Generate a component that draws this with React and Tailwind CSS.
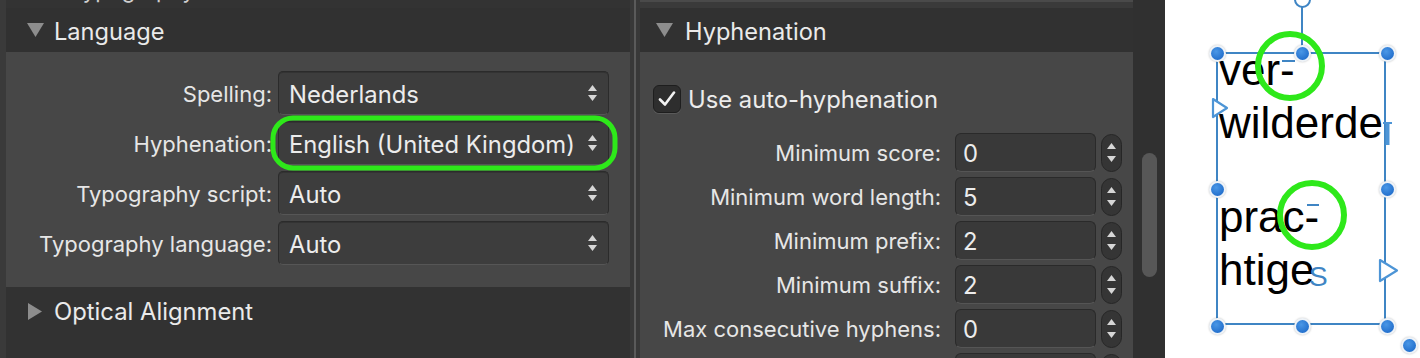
import React from "react";

const ui = "font-['Inter','Noto_Sans',sans-serif]";

const Disclosure = ({ open }) =>
  open ? (
    <svg width="17" height="14" viewBox="0 0 17 14">
      <path d="M0 0 H17 L8.5 14 Z" fill="#8d8d8d" />
    </svg>
  ) : (
    <svg width="14" height="17" viewBox="0 0 14 17">
      <path d="M0 0 L14 8.5 L0 17 Z" fill="#8d8d8d" />
    </svg>
  );

const UpDown = ({ gap = "gap-[4px]" }) => (
  <div className={`flex flex-col items-center ${gap}`}>
    <svg width="9" height="6" viewBox="0 0 9 6">
      <path d="M4.5 0 L9 6 H0 Z" fill="#d6d6d6" />
    </svg>
    <svg width="9" height="6" viewBox="0 0 9 6">
      <path d="M0 0 H9 L4.5 6 Z" fill="#d6d6d6" />
    </svg>
  </div>
);

const SelectRow = ({ label, value }) => (
  <div className="flex items-center h-[44px] shrink-0">
    <div className="w-[266px] pt-[3px] text-right text-[22px] text-[#e6e6e6]">{label}</div>
    <div className="ml-[6px] w-[331px] h-[44px] rounded-[5px] bg-[#3d3d3d] border border-[#2b2b2b] border-b-[#565656] shadow-[inset_0_1px_0_#333] flex items-center justify-between pl-[10px] pr-[11px]">
      <span className="pt-[3px] text-[23.8px] text-[#ececec]">{value}</span>
      <UpDown />
    </div>
  </div>
);

const SpinRow = ({ label, value }) => (
  <div className="flex items-center h-[39px] shrink-0">
    <div className="w-[301px] pt-[2px] text-right text-[22px] text-[#e6e6e6]">{label}</div>
    <div className="ml-[14px] w-[141px] h-[39px] rounded-[6px] bg-[#393939] border border-[#2a2a2a] border-b-[#555] flex items-center pl-[7px]">
      <span className="pt-[2px] text-[23.8px] text-[#ececec]">{value}</span>
    </div>
    <div className="ml-[5px] w-[21px] h-[38px] rounded-full bg-[#353535] border border-[#262626] flex items-center justify-center">
      <UpDown gap="gap-[7px]" />
    </div>
  </div>
);

const Handle = ({ x, y }) => (
  <div
    className="absolute w-[17px] h-[17px] -ml-[8.5px] -mt-[8.5px] rounded-full bg-[#eef3f8] shadow-[0_0_2px_rgba(0,0,0,0.25)] flex items-center justify-center"
    style={{ left: x, top: y }}
  >
    <div className="w-[13px] h-[13px] rounded-full bg-[radial-gradient(circle_at_40%_35%,#4a97e6,#1662c4)]" />
  </div>
);

const handles = [
  [52, 53], [137, 53], [222, 53],
  [52, 189], [222, 189],
  [52, 326], [137, 326], [222, 326],
  [244, 345],
];

export default function App() {
  return (
    <div className={`relative flex w-[1420px] h-[358px] overflow-hidden bg-[#333] ${ui}`}>
      {/* left inspector */}
      <div className="w-[634px] h-full flex bg-[#3a3a3a] shrink-0">
        <div className="w-[6px]" />
        <div className="w-[624px] flex flex-col">
          <div className="h-[8px] shrink-0 bg-[#333] overflow-hidden pl-[64px]">
            <div className="-mt-[25px] text-[22px] leading-[30px] text-[#cfcfcf]">Typography</div>
          </div>
          <div className="h-[44px] shrink-0 bg-[#313131] flex items-center pl-[21px]">
            <Disclosure open />
            <span className="ml-[10px] pt-[3px] text-[23.6px] text-[#eaeaea]">Language</span>
          </div>
          <div className="h-[235px] shrink-0 bg-[#474747] pt-[19px] flex flex-col gap-[6px]">
            <SelectRow label="Spelling:" value="Nederlands" />
            <SelectRow label="Hyphenation:" value="English (United Kingdom)" />
            <SelectRow label="Typography script:" value="Auto" />
            <SelectRow label="Typography language:" value="Auto" />
          </div>
          <div className="h-[48px] shrink-0 bg-[#323232] flex items-center pl-[22px]">
            <Disclosure />
            <span className="ml-[12px] pt-[2px] text-[23.8px] text-[#eaeaea]">Optical Alignment</span>
          </div>
          <div className="flex-1 bg-[#323232]" />
        </div>
        <div className="w-[4px] bg-[#383838]" />
      </div>

      {/* divider */}
      <div className="w-[2px] h-full shrink-0 bg-[#5a5a5a]" />

      {/* right inspector */}
      <div className="w-[529px] h-full flex shrink-0 bg-[#363636]">
        <div className="w-[4px] bg-[#383838]" />
        <div className="w-[493px] flex flex-col">
          <div className="h-[8px] shrink-0 bg-[#3a3a3a] border-t-2 border-[#4a4a4a]" />
          <div className="h-[44px] shrink-0 bg-[#313131] flex items-center pl-[16px]">
            <Disclosure open />
            <span className="ml-[12px] pt-[3px] text-[23.6px] text-[#eaeaea]">Hyphenation</span>
          </div>
          <div className="flex-1 min-h-0 overflow-hidden bg-[#474747] pt-[33px]">
            <div className="flex items-center pl-[13px] h-[28px]">
              <div className="w-[28px] h-[28px] rounded-[6px] bg-[#2e2e2e] border border-[#1e1e1e] shadow-[0_1px_0_#5a5a5a] flex items-center justify-center">
                <svg width="18" height="16" viewBox="0 0 18 16">
                  <path d="M2 8.5 L7 13.5 L16 1.5" fill="none" stroke="#f2f2f2" strokeWidth="2.6" strokeLinecap="round" strokeLinejoin="round" />
                </svg>
              </div>
              <span className="ml-[7px] pt-[2px] text-[23.8px] text-[#ececec]">Use auto-hyphenation</span>
            </div>
            <div className="mt-[20px] flex flex-col gap-[5px]">
              <SpinRow label="Minimum score:" value="0" />
              <SpinRow label="Minimum word length:" value="5" />
              <SpinRow label="Minimum prefix:" value="2" />
              <SpinRow label="Minimum suffix:" value="2" />
              <SpinRow label="Max consecutive hyphens:" value="0" />
              <SpinRow label="" value="" />
            </div>
          </div>
        </div>
        <div className="w-[32px] bg-[#303030] pt-[153px] pl-[9px]">
          <div className="w-[15px] h-[124px] rounded-full bg-[#575757]" />
        </div>
      </div>

      {/* canvas */}
      <div className="relative flex-1 h-full bg-white">
        <div className="absolute left-[137px] top-0 w-[2px] h-[53px] -ml-px bg-[#3f85c4]" />
        <div className="absolute left-[129px] -top-[9px] w-[17px] h-[17px] rounded-full border-2 border-[#3f85c4] bg-white" />
        <div className="absolute left-[52px] top-[53px] w-[170px] h-[273px] border-2 border-[#3f85c4] -ml-px -mt-px" />

        <div className="absolute left-[54px] top-[43px] font-['Liberation_Sans','Arial',sans-serif] text-[44px] leading-[53px] text-black">
          <div>ver-</div>
          <div>wilderde</div>
          <div className="mt-[41px]">prac-</div>
          <div>htige</div>
        </div>

        {/* text flow markers */}
        <div className="absolute left-[117px] top-[60px] w-[13px] h-[2px] bg-[#3f85c4]" />
        <div className="absolute left-[142px] top-[204px] w-[12px] h-[2px] bg-[#3f85c4]" />
        <svg className="absolute left-[46px] top-[97px]" width="18" height="22" viewBox="0 0 18 22">
          <path d="M2 2 L16 11 L2 20 Z" fill="white" stroke="#4d95d6" strokeWidth="2.2" strokeLinejoin="round" />
        </svg>
        <svg className="absolute left-[213px] top-[258px]" width="21" height="25" viewBox="0 0 21 25">
          <path d="M2 2 L19 12.5 L2 23 Z" fill="white" stroke="#4d95d6" strokeWidth="2.2" strokeLinejoin="round" />
        </svg>
        <svg className="absolute left-[217px] top-[121px]" width="11" height="25" viewBox="0 0 11 25">
          <path d="M1 2 H10" stroke="#4d95d6" strokeWidth="2" />
          <path d="M5.5 2 V24" stroke="#4d95d6" strokeWidth="4" />
        </svg>
        <span className="absolute left-[144px] top-[262px] font-['Liberation_Sans','Arial',sans-serif] text-[28px] leading-[30px] text-[#3f85c4]">S</span>

        {handles.map(([x, y]) => (
          <Handle key={`${x}-${y}`} x={x} y={y} />
        ))}
      </div>

      {/* green annotations */}
      <svg className="absolute inset-0 pointer-events-none" width="1420" height="358" viewBox="0 0 1420 358">
        <rect x="273" y="118" width="342" height="50" rx="20" fill="none" stroke="#2ee81a" strokeWidth="5" />
        <circle cx="1290" cy="66" r="32" fill="none" stroke="#2ee81a" strokeWidth="6" />
        <circle cx="1312" cy="215" r="32" fill="none" stroke="#2ee81a" strokeWidth="6" />
      </svg>
    </div>
  );
}
